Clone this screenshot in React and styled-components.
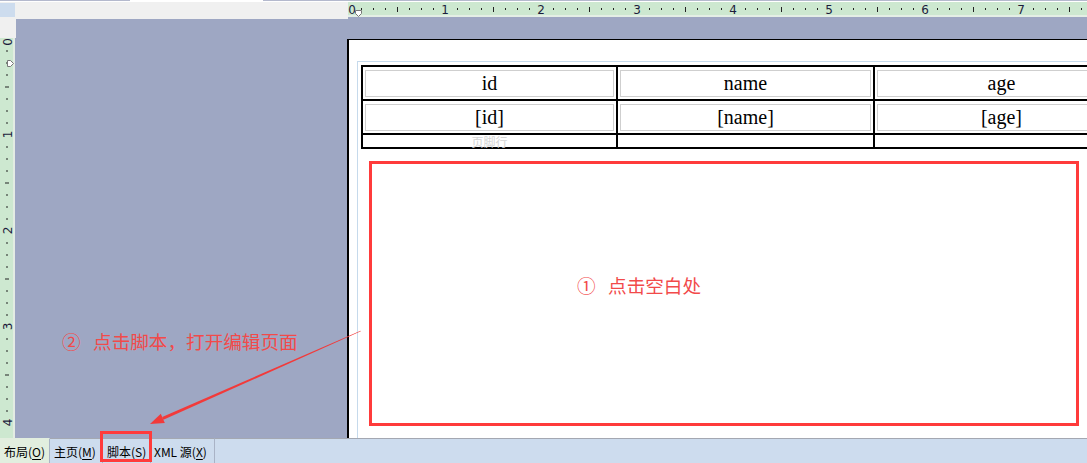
import React from 'react';
import styled, { createGlobalStyle } from 'styled-components';

const GlobalStyle = createGlobalStyle`
  html, body {
    margin: 0;
    padding: 0;
    background: #fff;
    overflow: hidden;
  }
  * {
    box-sizing: border-box;
  }
`;

const RULER_GREEN = '#cde8d0';
const WORKSPACE = '#9ea7c3';
const TICK = 12;

const Screen = styled.div`
  position: relative;
  width: 1087px;
  height: 463px;
  overflow: hidden;
  display: grid;
  grid-template-columns: 16px 1fr;
  grid-template-rows: 2px 17px 1fr 25px;
  font-family: "Noto Sans CJK SC", "Noto Sans", sans-serif;
`;

const TopLine = styled.div`
  grid-column: 1 / 3;
  background-color: #fff;
  background-image: linear-gradient(
    to right,
    #b4b9cd 130px,
    #fff 130px,
    #fff 263px,
    #b4b9cd 263px
  );
  background-size: 100% 1px;
  background-repeat: no-repeat;
`;

const Corner = styled.div`
  background: #cddcee;
  border-top: 1px solid #f0f0f0;
  border-bottom: 2px solid #f0f0f0;
  border-right: 1px solid #f0f0f0;
`;

const TopBar = styled.div`
  display: flex;
  background: #f0f0f0;
`;

const TopFiller = styled.div`
  width: 332px;
  flex-shrink: 0;
`;

const TopRulerWrap = styled.div`
  flex: 1;
  background: ${WORKSPACE};
`;

const TopRulerStrip = styled.div`
  height: 15px;
  background: ${RULER_GREEN};
  border-bottom: 2px solid #e4efe5;

  svg {
    display: block;
    overflow: hidden;
  }
`;

const SideColumn = styled.div`
  display: flex;
  flex-direction: column;
  background: ${WORKSPACE};
`;

const SideFiller = styled.div`
  height: 19px;
  background: #f0f0f0;
`;

const SideRuler = styled.div`
  flex: 1;
  width: 15px;
  background: ${RULER_GREEN};
  border-right: 2px solid #e3ece3;

  svg {
    display: block;
    overflow: visible;
  }
`;

const Workspace = styled.div`
  background: ${WORKSPACE};
  padding: 20px 0 0 331px;
  overflow: hidden;
  display: flex;
  align-items: flex-start;
`;

const Page = styled.div`
  flex-shrink: 0;
  width: 820px;
  min-height: 520px;
  background: #fff;
  border-left: 2px solid #000;
  border-top: 1px solid #000;
  padding: 21px 0 0 8px;
`;

const Band = styled.div`
  min-height: 480px;
  border-left: 1px solid #c6daec;
  border-top: 1px solid #c6daec;
  padding: 3px 0 0 3px;
`;

const Table = styled.div`
  display: grid;
  grid-template-columns: 255px 257px 255px;
  grid-template-rows: 34px 34px 14px;
  border-left: 2px solid #000;
  border-top: 2px solid #000;
`;

const Cell = styled.div`
  border-right: 2px solid #000;
  border-bottom: 2px solid #000;
  padding: 3px 2px 2px;
`;

const FieldBox = styled.div`
  height: 100%;
  border: 1px solid #cfcfcf;
  display: flex;
  align-items: center;
  justify-content: center;
  padding-bottom: 1px;
  font-family: "Liberation Serif", "Times New Roman", serif;
  font-size: 20px;
  line-height: 1;
  color: #000;
`;

const FooterCell = styled.div`
  border-right: 2px solid #000;
  border-bottom: 2px solid #000;
  text-align: center;
  font-size: 12px;
  line-height: 13px;
  color: #d4d4d4;
  white-space: nowrap;
`;

const TabBar = styled.div`
  grid-column: 1 / 3;
  display: flex;
  background: #cddcee;
`;

const Tab = styled.div`
  width: ${(p) => p.$w}px;
  flex-shrink: 0;
  display: flex;
  align-items: center;
  padding-left: ${(p) => p.$pad}px;
  border-right: 1px solid #a9b3c6;
  border-top: 1px solid ${(p) => (p.$active ? '#e2eedf' : '#a4a8b2')};
  background: ${(p) => (p.$active ? '#e2eedf' : 'transparent')};
  font-size: 12px;
  color: #000;
  white-space: nowrap;

  u {
    text-decoration-thickness: 1px;
    text-underline-offset: 2px;
  }
`;

const TabRest = styled.div`
  flex: 1;
  border-top: 1px solid #a4a8b2;
`;

const RedFrame = styled.div`
  position: absolute;
  left: ${(p) => p.$x}px;
  top: ${(p) => p.$y}px;
  width: ${(p) => p.$w}px;
  height: ${(p) => p.$h}px;
  border: 3px solid #ff3b3b;
  pointer-events: none;
`;

const Note = styled.div`
  position: absolute;
  left: ${(p) => p.$x}px;
  top: ${(p) => p.$y}px;
  font-family: "Noto Sans CJK SC", sans-serif;
  font-size: 18.6px;
  line-height: 19px;
  color: #f24a4a;
  white-space: pre;
  pointer-events: none;
`;

const Overlay = styled.svg`
  position: absolute;
  left: 0;
  top: 0;
  pointer-events: none;
`;

function TopRuler() {
  const width = 739;
  const marks = [];
  for (let i = 0; i * TICK + 1 < width; i++) {
    const x = 1 + i * TICK;
    if (i % 8 === 0) {
      marks.push(
        <text
          key={i}
          x={i === 0 ? 4 : x}
          y={11.5}
          fontSize="12"
          fontFamily="'DejaVu Sans', sans-serif"
          textAnchor="middle"
          fill="#1c1c3c"
        >
          {i / 8}
        </text>
      );
    } else if (i % 4 === 0) {
      marks.push(<rect key={i} x={x} y={5} width={1} height={5} fill="#222" />);
    } else {
      marks.push(<rect key={i} x={x} y={6} width={1} height={2} fill="#222" />);
    }
  }
  return (
    <svg width={width} height={15}>
      {marks}
      <path d="M7.5 8.5 h6 v3 l-3 3 l-3 -3 z" fill="#fff" stroke="#777" strokeWidth="1" />
    </svg>
  );
}

function LeftRuler() {
  const height = 396;
  const marks = [];
  for (let i = 0; i * TICK < height; i++) {
    const y = 0.5 + i * TICK;
    if (i % 8 === 0) {
      marks.push(
        <text
          key={i}
          x={0}
          y={0}
          fontSize="12"
          fontFamily="'DejaVu Sans', sans-serif"
          textAnchor="middle"
          fill="#1c1c3c"
          transform={`translate(12 ${i === 0 ? 4 : y}) rotate(-90)`}
        >
          {i / 8}
        </text>
      );
    } else if (i % 4 === 0) {
      marks.push(<rect key={i} x={5} y={y} width={4} height={1} fill="#222" />);
    } else {
      marks.push(<rect key={i} x={6} y={y} width={2} height={1} fill="#222" />);
    }
  }
  return (
    <svg width={13} height={height}>
      {marks}
      <path d="M7.5 22.5 v6 h3 l3 -3 l-3 -3 z" fill="#fff" stroke="#777" strokeWidth="1" />
    </svg>
  );
}

const headers = ['id', 'name', 'age'];
const fields = ['[id]', '[name]', '[age]'];

const tabs = [
  { name: '布局', key: 'O', w: 50, pad: 4, active: true },
  { name: '主页', key: 'M', w: 53, pad: 4 },
  { name: '脚本', key: 'S', w: 48, pad: 4 },
  { name: 'XML 源', key: 'X', w: 64, pad: 3 },
];

export default function App() {
  return (
    <>
      <GlobalStyle />
      <Screen>
        <TopLine />
        <Corner />
        <TopBar>
          <TopFiller />
          <TopRulerWrap>
            <TopRulerStrip>
              <TopRuler />
            </TopRulerStrip>
          </TopRulerWrap>
        </TopBar>

        <SideColumn>
          <SideFiller />
          <SideRuler>
            <LeftRuler />
          </SideRuler>
        </SideColumn>

        <Workspace>
          <Page>
            <Band>
              <Table>
                {headers.map((h) => (
                  <Cell key={h}>
                    <FieldBox>{h}</FieldBox>
                  </Cell>
                ))}
                {fields.map((f) => (
                  <Cell key={f}>
                    <FieldBox>{f}</FieldBox>
                  </Cell>
                ))}
                <FooterCell>页脚行</FooterCell>
                <FooterCell />
                <FooterCell />
              </Table>
            </Band>
          </Page>
        </Workspace>

        <TabBar>
          {tabs.map((t) => (
            <Tab key={t.key} $w={t.w} $pad={t.pad} $active={t.active}>
              {t.name}(<u>{t.key}</u>)
            </Tab>
          ))}
          <TabRest />
        </TabBar>

        <RedFrame $x={369} $y={161} $w={710} $h={265} />
        <RedFrame $x={100} $y={431} $w={52} $h={31} />

        <Note $x={577} $y={275}>{'①   点击空白处'}</Note>
        <Note $x={62} $y={331}>{'②   点击脚本，打开编辑页面'}</Note>

        <Overlay width="1087" height="463" viewBox="0 0 1087 463">
          <polygon
            points="360.8,331.3 360.6,330.7 162.2,416.9 163.4,419.7"
            fill="#f23a3a"
          />
          <polygon points="150,424 164.8,422.9 160.8,413.7" fill="#f23a3a" />
        </Overlay>
      </Screen>
    </>
  );
}
